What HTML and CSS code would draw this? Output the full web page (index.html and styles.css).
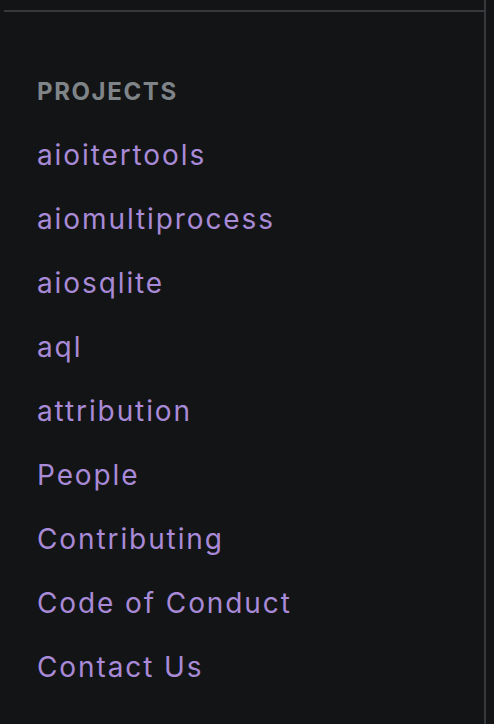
FILE: index.html
```html
<!DOCTYPE html>
<html lang="en">
<head>
    <meta charset="UTF-8">
    <meta name="viewport" content="width=device-width, initial-scale=1.0">
    <title>Projects</title>
    <link rel="stylesheet" href="styles.css">
</head>
<body>
    <aside class="sidebar">
        <div class="sidebar-top"></div>
        <nav class="sidebar-tree">
            <p class="caption">Projects</p>
            <ul>
                <li><a href="#">aioitertools</a></li>
                <li><a href="#">aiomultiprocess</a></li>
                <li><a href="#">aiosqlite</a></li>
                <li><a href="#">aql</a></li>
                <li><a href="#">attribution</a></li>
                <li><a href="#">People</a></li>
                <li><a href="#">Contributing</a></li>
                <li><a href="#">Code of Conduct</a></li>
                <li><a href="#">Contact Us</a></li>
            </ul>
        </nav>
    </aside>
</body>
</html>
```

FILE: styles.css
```css
html, body {
    margin: 0;
    padding: 0;
    height: 100%;
}
body {
    background: #131416;
    font-family: 'Inter', 'Noto Sans', sans-serif;
    overflow: hidden;
}
.sidebar {
    width: 484px;
    height: 100%;
    border-right: 2px solid #36383b;
}
.sidebar-top {
    height: 10px;
    margin-left: 4px;
    border-bottom: 2px solid #36383b;
}
.sidebar-tree {
    padding: 64px 0 0 37px;
}
.caption {
    margin: 0;
    font-size: 24px;
    line-height: 32px;
    font-weight: 700;
    text-transform: uppercase;
    letter-spacing: 1.6px;
    color: #7f8489;
}
.sidebar-tree ul {
    list-style: none;
    margin: 15px 0 0;
    padding: 0;
}
.sidebar-tree li {
    font-size: 28px;
    line-height: 64px;
    letter-spacing: 1.9px;
}
.sidebar-tree a {
    color: #a88ad6;
    text-decoration: none;
}
```
